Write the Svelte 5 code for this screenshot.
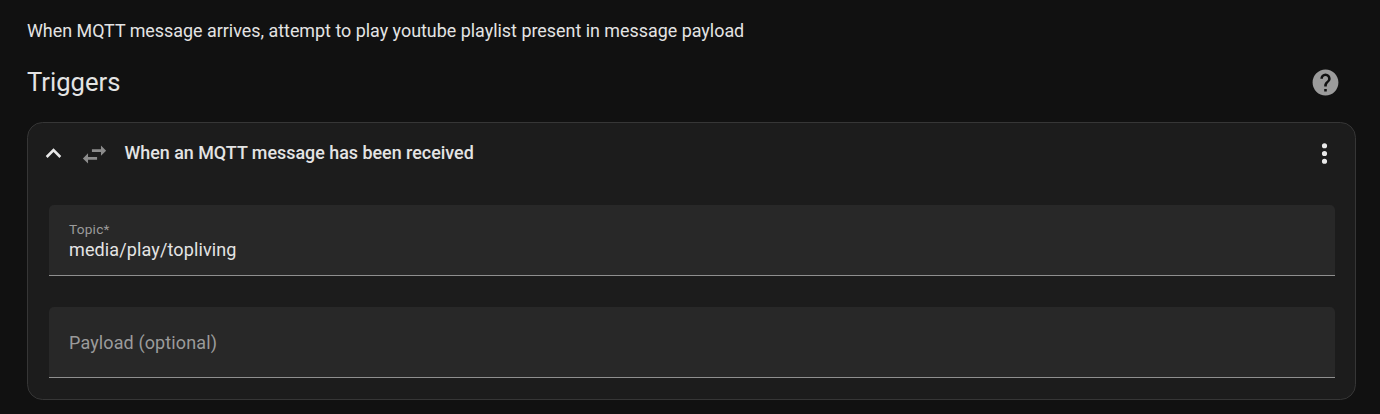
<script lang="ts">
    type Field = {label: string; value: string};

    const description = "When MQTT message arrives, attempt to play youtube playlist present in message payload";

    let expanded = $state(true);
    let fields = $state<Field[]>([
        {label: "Topic*", value: "media/play/topliving"},
        {label: "Payload (optional)", value: ""}
    ]);
</script>

<main>
    <p>{description}</p>

    <header>
        <h2>Triggers</h2>
        <button aria-label="Help">
            <svg viewBox="0 0 24 24"><path d="M15.07,11.25L14.17,12.17C13.45,12.89 13,13.5 13,15H11V14.5C11,13.39 11.45,12.39 12.17,11.67L13.41,10.41C13.78,10.05 14,9.55 14,9C14,7.89 13.1,7 12,7A2,2 0 0,0 10,9H8A4,4 0 0,1 12,5A4,4 0 0,1 16,9C16,9.88 15.64,10.67 15.07,11.25M13,19H11V17H13M12,2A10,10 0 0,0 2,12A10,10 0 0,0 12,22A10,10 0 0,0 22,12C22,6.47 17.5,2 12,2Z" /></svg>
        </button>
    </header>

    <section class="card">
        <div class="summary">
            <button class="light" aria-label="Toggle" onclick={() => (expanded = !expanded)}>
                <svg viewBox="0 0 24 24"><path d="M7.41,15.41L12,10.83L16.59,15.41L18,14L12,8L6,14L7.41,15.41Z" /></svg>
            </button>
            <svg class="type" viewBox="0 0 24 24"><path d="M21,9L17,5V8H10V10H17V13M7,11L3,15L7,19V16H14V14H7V11Z" /></svg>
            <h3>When an MQTT message has been received</h3>
            <button class="light" aria-label="Menu">
                <svg viewBox="0 0 24 24"><path d="M12,16A2,2 0 0,1 14,18A2,2 0 0,1 12,20A2,2 0 0,1 10,18A2,2 0 0,1 12,16M12,10A2,2 0 0,1 14,12A2,2 0 0,1 12,14A2,2 0 0,1 10,12A2,2 0 0,1 12,10M12,4A2,2 0 0,1 14,6A2,2 0 0,1 12,8A2,2 0 0,1 10,6A2,2 0 0,1 12,4Z" /></svg>
            </button>
        </div>

        {#if expanded}
            <div class="fields">
                {#each fields as field}
                    <div class="field">
                        {#if field.value}
                            <span class="label">{field.label}</span>
                            <span class="value">{field.value}</span>
                        {:else}
                            <span class="placeholder">{field.label}</span>
                        {/if}
                    </div>
                {/each}
            </div>
        {/if}
    </section>
</main>

<style>
    :global(body) {
        background-color: #111;
    }

    main {
        box-sizing: border-box;
        height: 414px;
        padding: 20px 24px 0 27px;
        font-family: Roboto, sans-serif;
        font-size: 17.9px;
        color: #e4e4e4;
    }

    p {
        margin: 0;
        line-height: 22px;
    }

    header {
        display: flex;
        align-items: center;
        justify-content: space-between;
        height: 32px;
        margin-top: 24px;
        padding: 0 15px 0 0;
    }

    h2 {
        margin: 0;
        font-size: 25.6px;
        font-weight: 400;
        line-height: 32px;
    }

    button {
        display: flex;
        padding: 0;
        border: 0;
        background: none;
        color: #9b9b9b;
    }

    button.light {
        color: #e8e8e8;
    }

    svg {
        display: block;
        width: 31px;
        height: 31px;
        fill: currentColor;
    }

    .card {
        box-sizing: border-box;
        height: 278px;
        margin-top: 24px;
        border: 1px solid #363636;
        border-radius: 15.5px;
        background-color: #1c1c1c;
    }

    .summary {
        display: flex;
        align-items: center;
        height: 60px;
        padding: 0 15px 0 10px;
    }

    .type {
        margin: 3px 0 0 10px;
        color: #8c8c8c;
    }

    h3 {
        flex: 1;
        margin: 0 0 0 14.5px;
        font-size: 17.9px;
        font-weight: 500;
        line-height: 24px;
    }

    .fields {
        display: flex;
        flex-direction: column;
        gap: 31px;
        padding: 22px 20.5px 0;
    }

    .field {
        box-sizing: border-box;
        display: flex;
        flex-direction: column;
        justify-content: center;
        height: 71px;
        padding: 0 20.5px;
        border-bottom: 1px solid #8f8f8f;
        border-radius: 5px 5px 0 0;
        background-color: #282828;
        font-size: 18px;
        letter-spacing: 0.12px;
    }

    .label {
        margin: 1px 0;
        font-size: 13.7px;
        line-height: 18px;
        letter-spacing: 0.2px;
        color: #9b9b9b;
    }

    .value {
        line-height: 22px;
    }

    .placeholder {
        padding-top: 2px;
        line-height: 24px;
        color: #9b9b9b;
    }
</style>
